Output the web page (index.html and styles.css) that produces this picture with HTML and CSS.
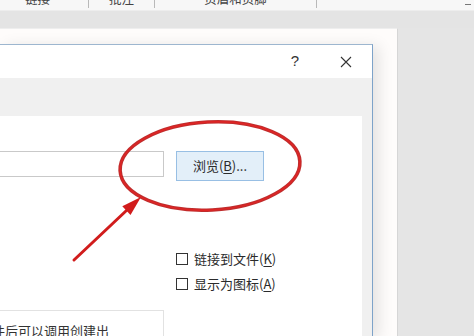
FILE: index.html
```html
<!DOCTYPE html>
<html lang="zh">
<head>
<meta charset="utf-8">
<link rel="stylesheet" href="styles.css">
</head>
<body>
<div class="ribbon">
  <div class="tab tab-link">链接</div>
  <div class="sep"></div>
  <div class="tab tab-note">批注</div>
  <div class="sep"></div>
  <div class="tab tab-head">页眉和页脚</div>
  <div class="sep"></div>
  <div class="ribbon-fill"></div>
  <div class="collapse"></div>
</div>
<div class="band"></div>
<div class="workspace">
  <div class="parent">
    <div class="dialog">
      <div class="titlebar">
        <span class="help">?</span>
        <span class="close">
          <svg width="12" height="12" viewBox="0 0 12 12"><path d="M1 1L11 11M11 1L1 11" stroke="#333" stroke-width="1.1" fill="none"/></svg>
        </span>
      </div>
      <div class="tabs-band"></div>
      <div class="body">
        <div class="pane">
          <div class="file-row">
            <div class="input"></div>
            <div class="button">浏览(<u>B</u>)...</div>
          </div>
          <div class="checks">
            <label class="check"><span class="box"></span><span>链接到文件(<u>K</u>)</span></label>
            <label class="check"><span class="box"></span><span>显示为图标(<u>A</u>)</span></label>
          </div>
          <div class="notes">件后可以调用创建出</div>
        </div>
      </div>
    </div>
  </div>
  <div class="side"></div>
</div>
<svg class="markup" width="474" height="336" viewBox="0 0 474 336">
  <ellipse cx="210" cy="166" rx="90" ry="44" transform="rotate(-3 210 166)" fill="none" stroke="#b81616" stroke-width="3.6" opacity="0.9"/>
  <ellipse cx="210" cy="166" rx="90" ry="44" transform="rotate(-3 210 166)" fill="none" stroke="#e02424" stroke-width="1.4"/>
  <line x1="74" y1="260" x2="127" y2="210" stroke="#d11c1c" stroke-width="3" stroke-linecap="round"/>
  <polygon points="141,197 130.5,215.1 122.3,206.3" fill="#d11c1c"/>
</svg>
</body>
</html>
```
FILE: styles.css
```css
html, body {
  margin: 0;
  padding: 0;
}
body {
  width: 474px;
  height: 336px;
  overflow: hidden;
  background: #e5e5e5;
  font-family: "Noto Sans CJK SC", "Noto Sans", sans-serif;
  color: #222;
  position: relative;
}
.ribbon {
  height: 10px;
  background: #f7f7f7;
  display: flex;
  overflow: hidden;
}
.tab {
  font-size: 12.5px;
  line-height: 14px;
  margin-top: -8px;
  color: #444;
  text-align: center;
  flex: none;
}
.tab-link { width: 63px; padding-left: 25px; text-align: left; }
.tab-note { width: 65px; }
.tab-head { width: 161px; }
.sep {
  width: 1px;
  height: 8px;
  background: #b9b9b9;
  flex: none;
}
.ribbon-fill { flex: 1; }
.collapse {
  width: 6px;
  height: 3px;
  margin: 4px 3px 0 0;
  border-top: 1px solid #777;
}
.band {
  height: 17px;
  background: #e4e4e4;
  border-top: 1px solid #ededed;
}
.workspace {
  display: flex;
  height: 308px;
}
.parent {
  width: 398px;
  background: #fefcfb;
  border-top: 1px solid #eeeeee;
  border-right: 1px solid #d6d6d6;
  padding-top: 15px;
  box-sizing: border-box;
}
.side {
  flex: 1;
  background: #e5e5e5;
}
.dialog {
  width: 373px;
  height: 293px;
  box-sizing: border-box;
  border-top: 1px solid #9db6cf;
  border-right: 1px solid #7ea3c9;
  background: #f0f0f0;
  box-shadow: 6px 2px 14px rgba(0, 0, 0, 0.10);
  display: flex;
  flex-direction: column;
}
.titlebar {
  height: 33px;
  background: #ffffff;
  display: flex;
  align-items: center;
  justify-content: flex-end;
  gap: 31px;
  padding-right: 16px;
  flex: none;
}
.help {
  width: 20px;
  text-align: center;
  font-family: "Liberation Sans", sans-serif;
  font-size: 15px;
  color: #333;
  line-height: 16px;
  padding-bottom: 1px;
}
.close {
  width: 20px;
  height: 16px;
  display: flex;
  align-items: center;
  justify-content: center;
}
.tabs-band {
  height: 38px;
  background: #f0f0f0;
  flex: none;
}
.body {
  flex: 1;
  padding-right: 10px;
  background: #f0f0f0;
  display: flex;
}
.pane {
  flex: 1;
  background: #ffffff;
  padding-top: 35px;
}
.file-row {
  display: flex;
  align-items: flex-start;
  gap: 12px;
}
.input {
  width: 164px;
  height: 26px;
  box-sizing: border-box;
  border: 1px solid #c9c9c9;
  border-left: none;
  background: #fff;
}
.button {
  width: 88px;
  height: 30px;
  box-sizing: border-box;
  border: 1px solid #98bfe4;
  background: #e3eff9;
  font-size: 13px;
  line-height: 28px;
  text-align: center;
  color: #2b2b2b;
}
.button u, .check u {
  text-decoration-thickness: 1px;
  text-underline-offset: 2px;
}
.checks {
  margin: 65px 0 0 176px;
  display: flex;
  flex-direction: column;
}
.check {
  height: 25px;
  display: flex;
  align-items: center;
  gap: 6px;
  font-size: 13px;
  color: #2b2b2b;
}
.box {
  width: 12px;
  height: 12px;
  box-sizing: border-box;
  border: 1px solid #333;
  background: #fff;
  flex: none;
}
.notes {
  margin-top: 14px;
  width: 164px;
  height: 40px;
  box-sizing: border-box;
  border: 1px solid #e2e2e2;
  border-left: none;
  border-bottom: none;
  padding-top: 12px;
  font-size: 13px;
  line-height: 16px;
  text-indent: -8px;
  color: #333;
  white-space: nowrap;
  overflow: hidden;
}
.markup {
  position: absolute;
  left: 0;
  top: 0;
  pointer-events: none;
}
```
